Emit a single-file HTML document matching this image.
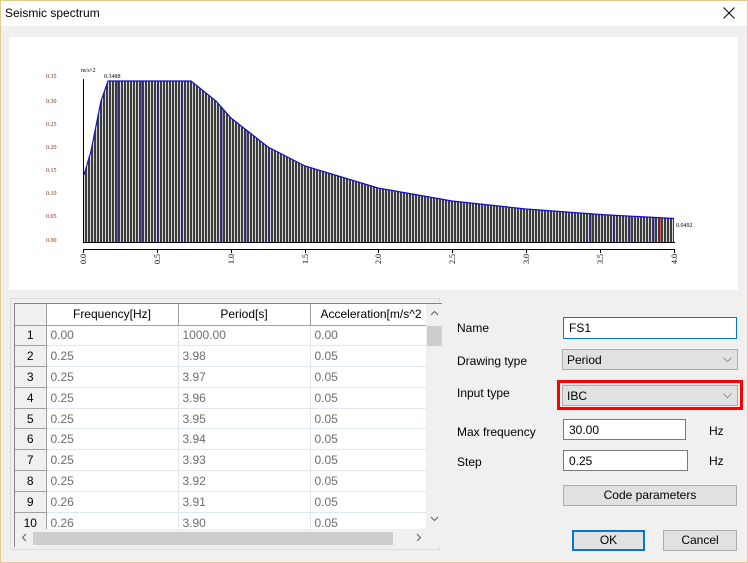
<!DOCTYPE html>
<html><head><meta charset="utf-8"><style>
*{box-sizing:border-box;margin:0;padding:0}
body{width:748px;height:563px;background:#f0f0f0;font-family:"Liberation Sans",sans-serif;font-size:12px;color:#000;position:relative;overflow:hidden;border:1px solid #e6c88e}
.a{position:absolute}
.tb{background:#fff;border:1px solid #7a7a7a;padding:3px 5px;font-size:12px}
.cb{background:#e1e1e1;border:1px solid #adadad;padding:3px 4px;font-size:12px}
.btn{background:#e1e1e1;border:1px solid #adadad;text-align:center;line-height:18px}
table{border-collapse:collapse;font-size:12px}
td{height:20.8px;border-right:1px solid #dde6f2;border-bottom:1px solid #dde6f2;color:#6d6d6d;padding-left:4px;background:#fff}
td.h{background:#f0f0f0;color:#000;text-align:center;padding:0;border-right:1px solid #a0a0a0;border-bottom:1px solid #a0a0a0}
th{height:21px;font-weight:normal;background:#fff;border-right:1px solid #a0a0a0;border-bottom:1px solid #a0a0a0;text-align:center}
</style></head><body>
<div class="a" style="left:0;top:0;width:746px;height:25px;background:#fff"></div>
<div class="a" style="left:4px;top:5px;font-size:12px">Seismic spectrum</div>
<svg class="a" style="left:722px;top:6px" width="12" height="12"><path d="M0.5 0.5L11.5 11.5M11.5 0.5L0.5 11.5" stroke="#000" stroke-width="1"/></svg>
<div class="a" style="left:8px;top:36px;width:729px;height:253px;background:#fff"></div>
<svg class="a" style="left:0;top:0" width="748" height="290">
<defs><pattern id="p" width="3" height="10" patternUnits="userSpaceOnUse"><rect width="2.2" height="10" fill="#3c3c3c"/></pattern></defs>
<polygon fill="url(#p)" points="83,241 83,174 90,150 100,100 107,80 190,80 215,100 230,117 267,146 304,165 377,187 451,200 525,208 599,213.5 673,217.5 673,241"/>
<polyline fill="none" stroke="#1010c8" stroke-width="1.2" points="83,174 90,150 100,100 107,80 190,80 215,100 230,117 267,146 304,165 377,187 451,200 525,208 599,213.5 673,217.5"/>
<g stroke="#1818b0" stroke-width="1"><line x1="117" y1="80" x2="117" y2="241"/><line x1="141" y1="80" x2="141" y2="241"/><line x1="157" y1="80" x2="157" y2="241"/><line x1="181" y1="80" x2="181" y2="241"/><line x1="221" y1="106" x2="221" y2="241"/><line x1="245" y1="128" x2="245" y2="241"/><line x1="268" y1="146" x2="268" y2="241"/><line x1="590" y1="212" x2="590" y2="241"/><line x1="613" y1="214" x2="613" y2="241"/><line x1="629" y1="215" x2="629" y2="241"/><line x1="653" y1="216" x2="653" y2="241"/></g>
<line x1="660" y1="217" x2="660" y2="241" stroke="#f00"/>
<line x1="82.5" y1="78" x2="82.5" y2="242" stroke="#000"/>
<line x1="82" y1="241.5" x2="674" y2="241.5" stroke="#000"/>
<line x1="82" y1="248.5" x2="674" y2="248.5" stroke="#000"/>
<g stroke="#000"><line x1="82.5" y1="248" x2="82.5" y2="252"/><line x1="156.5" y1="248" x2="156.5" y2="252"/><line x1="230.5" y1="248" x2="230.5" y2="252"/><line x1="304.5" y1="248" x2="304.5" y2="252"/><line x1="377.5" y1="248" x2="377.5" y2="252"/><line x1="451.5" y1="248" x2="451.5" y2="252"/><line x1="525.5" y1="248" x2="525.5" y2="252"/><line x1="599.5" y1="248" x2="599.5" y2="252"/><line x1="673.5" y1="248" x2="673.5" y2="252"/></g>
<g font-size="6" fill="#8b2a10" font-family="Liberation Serif">
<text x="45" y="77">0.35</text><text x="45" y="102">0.30</text><text x="45" y="125">0.25</text><text x="45" y="148">0.20</text><text x="45" y="171">0.15</text><text x="45" y="194">0.10</text><text x="45" y="217">0.05</text><text x="45" y="241">0.00</text></g>
<g font-size="6" fill="#000" font-family="Liberation Serif"><text x="80" y="71">m/s^2</text><text x="103" y="77">0.3488</text><text x="675" y="226">0.0492</text></g>
<g font-size="8" fill="#000" font-family="Liberation Serif">
<text transform="translate(85,253) rotate(-90)" text-anchor="end">0.0</text><text transform="translate(159,253) rotate(-90)" text-anchor="end">0.5</text><text transform="translate(233,253) rotate(-90)" text-anchor="end">1.0</text><text transform="translate(307,253) rotate(-90)" text-anchor="end">1.5</text><text transform="translate(380,253) rotate(-90)" text-anchor="end">2.0</text><text transform="translate(454,253) rotate(-90)" text-anchor="end">2.5</text><text transform="translate(528,253) rotate(-90)" text-anchor="end">3.0</text><text transform="translate(602,253) rotate(-90)" text-anchor="end">3.5</text><text transform="translate(676,253) rotate(-90)" text-anchor="end">4.0</text></g>
</svg>
<div class="a" style="left:9px;top:297px;width:430px;height:252px;border:1px solid #dcdcdc"></div>
<div class="a" style="left:13px;top:302px;width:428px;height:244px;border-left:1px solid #828282;border-top:1px solid #828282;background:#f0f0f0;overflow:hidden">
<table style="width:411px;table-layout:fixed">
<colgroup><col style="width:31px"><col style="width:132px"><col style="width:132px"><col style="width:116px"></colgroup>
<tr><th style="background:#f0f0f0"></th><th>Frequency[Hz]</th><th>Period[s]</th><th style="white-space:nowrap;overflow:hidden;text-align:left;padding-left:10px">Acceleration[m/s^2</th></tr>
<tr><td class="h">1</td><td>0.00</td><td>1000.00</td><td>0.00</td></tr>
<tr><td class="h">2</td><td>0.25</td><td>3.98</td><td>0.05</td></tr>
<tr><td class="h">3</td><td>0.25</td><td>3.97</td><td>0.05</td></tr>
<tr><td class="h">4</td><td>0.25</td><td>3.96</td><td>0.05</td></tr>
<tr><td class="h">5</td><td>0.25</td><td>3.95</td><td>0.05</td></tr>
<tr><td class="h">6</td><td>0.25</td><td>3.94</td><td>0.05</td></tr>
<tr><td class="h">7</td><td>0.25</td><td>3.93</td><td>0.05</td></tr>
<tr><td class="h">8</td><td>0.25</td><td>3.92</td><td>0.05</td></tr>
<tr><td class="h">9</td><td>0.26</td><td>3.91</td><td>0.05</td></tr>
<tr><td class="h">10</td><td>0.26</td><td>3.90</td><td>0.05</td></tr>
</table>
<div class="a" style="left:411px;top:0;width:17px;height:225px;background:#f0f0f0"></div>
<div class="a" style="left:412px;top:22px;width:15px;height:20px;background:#cdcdcd"></div>
<svg class="a" style="left:415px;top:6px" width="9" height="6"><path d="M1 5L4.5 1.5L8 5" fill="none" stroke="#606060"/></svg>
<svg class="a" style="left:415px;top:212px" width="9" height="6"><path d="M1 1L4.5 4.5L8 1" fill="none" stroke="#606060"/></svg>
<div class="a" style="left:0;top:225px;width:428px;height:17px;background:#f0f0f0"></div>
<div class="a" style="left:18px;top:228px;width:360px;height:13px;background:#cdcdcd"></div>
<svg class="a" style="left:6px;top:229px" width="6" height="9"><path d="M5 1L1.5 4.5L5 8" fill="none" stroke="#606060"/></svg>
<svg class="a" style="left:401px;top:229px" width="6" height="9"><path d="M1 1L4.5 4.5L1 8" fill="none" stroke="#606060"/></svg>
</div>
<div class="a" style="left:456px;top:320px">Name</div>
<div class="a tb" style="left:562px;top:316px;width:174px;height:22px;border-color:#0078d7">FS1</div>
<div class="a" style="left:456px;top:353px">Drawing type</div>
<div class="a cb" style="left:561px;top:348px;width:176px;height:21px">Period<span style="position:absolute;right:5px;top:1px;color:#555">⌵</span></div>
<div class="a" style="left:456px;top:385px">Input type</div>
<div class="a" style="left:556px;top:379px;width:186px;height:30px;border:3px solid #f00"></div>
<div class="a cb" style="left:561px;top:384px;width:176px;height:21px">IBC<span style="position:absolute;right:5px;top:1px;color:#555">⌵</span></div>
<div class="a" style="left:456px;top:424px">Max frequency</div>
<div class="a tb" style="left:562px;top:418px;width:123px;height:21px">30.00</div>
<div class="a" style="left:708px;top:423px">Hz</div>
<div class="a" style="left:456px;top:454px">Step</div>
<div class="a tb" style="left:562px;top:449px;width:125px;height:21px">0.25</div>
<div class="a" style="left:708px;top:453px">Hz</div>
<div class="a btn" style="left:562px;top:484px;width:174px;height:21px">Code parameters</div>
<div class="a btn" style="left:571px;top:529px;width:73px;height:21px;border:2px solid #0078d7;line-height:17px">OK</div>
<div class="a btn" style="left:662px;top:529px;width:74px;height:21px">Cancel</div>
</body></html>
